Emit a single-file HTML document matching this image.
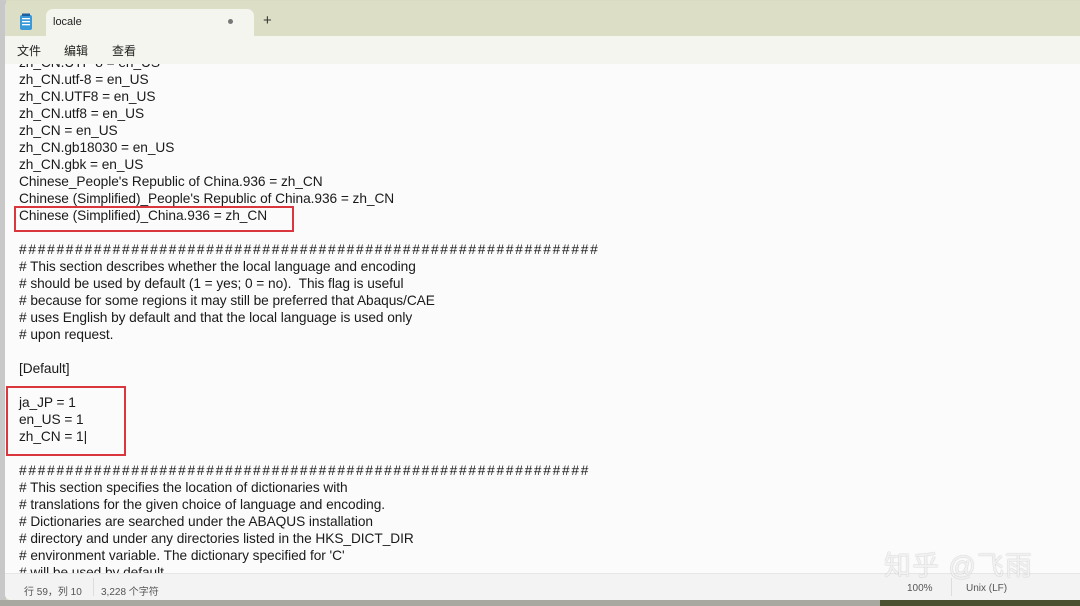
<!DOCTYPE html>
<html><head><meta charset="utf-8"><style>
body{margin:0;width:1080px;height:606px;overflow:hidden;background:#d9dcc0;position:relative;font-family:"Liberation Sans","Noto Sans CJK SC",sans-serif}
.left{position:absolute;left:0;top:0;width:6px;height:606px;background:#c8c8c8}
.bot{position:absolute;left:0;top:600px;width:1080px;height:6px;background:#a8a8a0}
.botr{position:absolute;left:880px;top:600px;width:200px;height:6px;background:#4a5030}
.win{position:absolute;left:5px;top:1px;width:1080px;height:599px;background:#f9f9f9;border-radius:6px 0 0 6px;overflow:hidden}
.tabbar{position:absolute;left:0;top:0;width:1080px;height:35px;background:#dcdfc6}
.tab{position:absolute;left:41px;top:8px;width:208px;height:28px;background:#f4f5ee;border-radius:7px 7px 0 0}
.menu{position:absolute;left:0;top:35px;width:1080px;height:28px;background:#f4f5ee;border-bottom:1px solid #e4e4e0;font-size:12px;color:#222}
.text{position:absolute;left:0;top:63px;width:1080px;height:509px;background:#fbfbfb;overflow:hidden}
.lines{position:absolute;left:14px;top:-10px;font-size:13.7px;line-height:17px;color:#1a1a1a;white-space:pre;letter-spacing:-0.05px}
.h{letter-spacing:1.75px}
.status{position:absolute;left:0;top:572px;width:1080px;height:27px;background:#f3f3f3;border-top:1px solid #e6e6e6;font-size:10px;color:#555}
.box{position:absolute;border:2px solid #d9363e;box-sizing:border-box}
.wm{position:absolute;left:884px;top:544px;font-size:27px;color:rgba(255,255,255,0.85);letter-spacing:1px;text-shadow:0 0 1px #999}
</style></head><body>
<div class="left"></div><div class="bot"></div><div class="botr"></div>
<div class="win">
<div class="tabbar"></div>
<div class="tab"></div>
<svg style="position:absolute;left:14px;top:12px" width="14" height="18" viewBox="0 0 14 18"><rect x="1" y="2" width="12" height="15" rx="2" fill="#3a9ad9"/><rect x="3" y="5" width="8" height="1.3" fill="#fff"/><rect x="3" y="8" width="8" height="1.3" fill="#fff"/><rect x="3" y="11" width="8" height="1.3" fill="#fff"/><rect x="3" y="0.5" width="8" height="2.5" fill="#1e5fa0"/></svg>
<div style="position:absolute;left:48px;top:15px;font-size:11px;color:#222">locale</div>
<div style="position:absolute;left:223px;top:18px;width:5px;height:5px;border-radius:50%;background:#777"></div>
<div style="position:absolute;left:258px;top:11px;font-size:15px;color:#333">+</div>
<div class="menu"><span style="position:absolute;left:12px;top:6px">文件</span><span style="position:absolute;left:59px;top:6px">编辑</span><span style="position:absolute;left:107px;top:6px">查看</span></div>
<div class="text"><div class="lines">zh_CN.UTF-8 = en_US
zh_CN.utf-8 = en_US
zh_CN.UTF8 = en_US
zh_CN.utf8 = en_US
zh_CN = en_US
zh_CN.gb18030 = en_US
zh_CN.gbk = en_US
Chinese_People's Republic of China.936 = zh_CN
Chinese (Simplified)_People's Republic of China.936 = zh_CN
Chinese (Simplified)_China.936 = zh_CN

<span class="h">##############################################################</span>
# This section describes whether the local language and encoding
# should be used by default (1 = yes; 0 = no).  This flag is useful
# because for some regions it may still be preferred that Abaqus/CAE
# uses English by default and that the local language is used only
# upon request.

[Default]

ja_JP = 1
en_US = 1
zh_CN = 1|

<span class="h">#############################################################</span>
# This section specifies the location of dictionaries with
# translations for the given choice of language and encoding.
# Dictionaries are searched under the ABAQUS installation
# directory and under any directories listed in the HKS_DICT_DIR
# environment variable. The dictionary specified for 'C'
# will be used by default.</div></div>
<div class="status"><span style="position:absolute;left:19px;top:9px">行 59，列 10</span><span style="position:absolute;left:88px;top:4px;width:1px;height:18px;background:#ddd"></span><span style="position:absolute;left:96px;top:9px">3,228 个字符</span><span style="position:absolute;left:902px;top:9px">100%</span><span style="position:absolute;left:946px;top:4px;width:1px;height:18px;background:#ddd"></span><span style="position:absolute;left:961px;top:9px">Unix (LF)</span></div>
</div>
<div class="box" style="left:14px;top:206px;width:280px;height:26px"></div>
<div class="box" style="left:6px;top:386px;width:120px;height:70px"></div>
<div class="wm">知乎 @飞雨</div>
</body></html>
